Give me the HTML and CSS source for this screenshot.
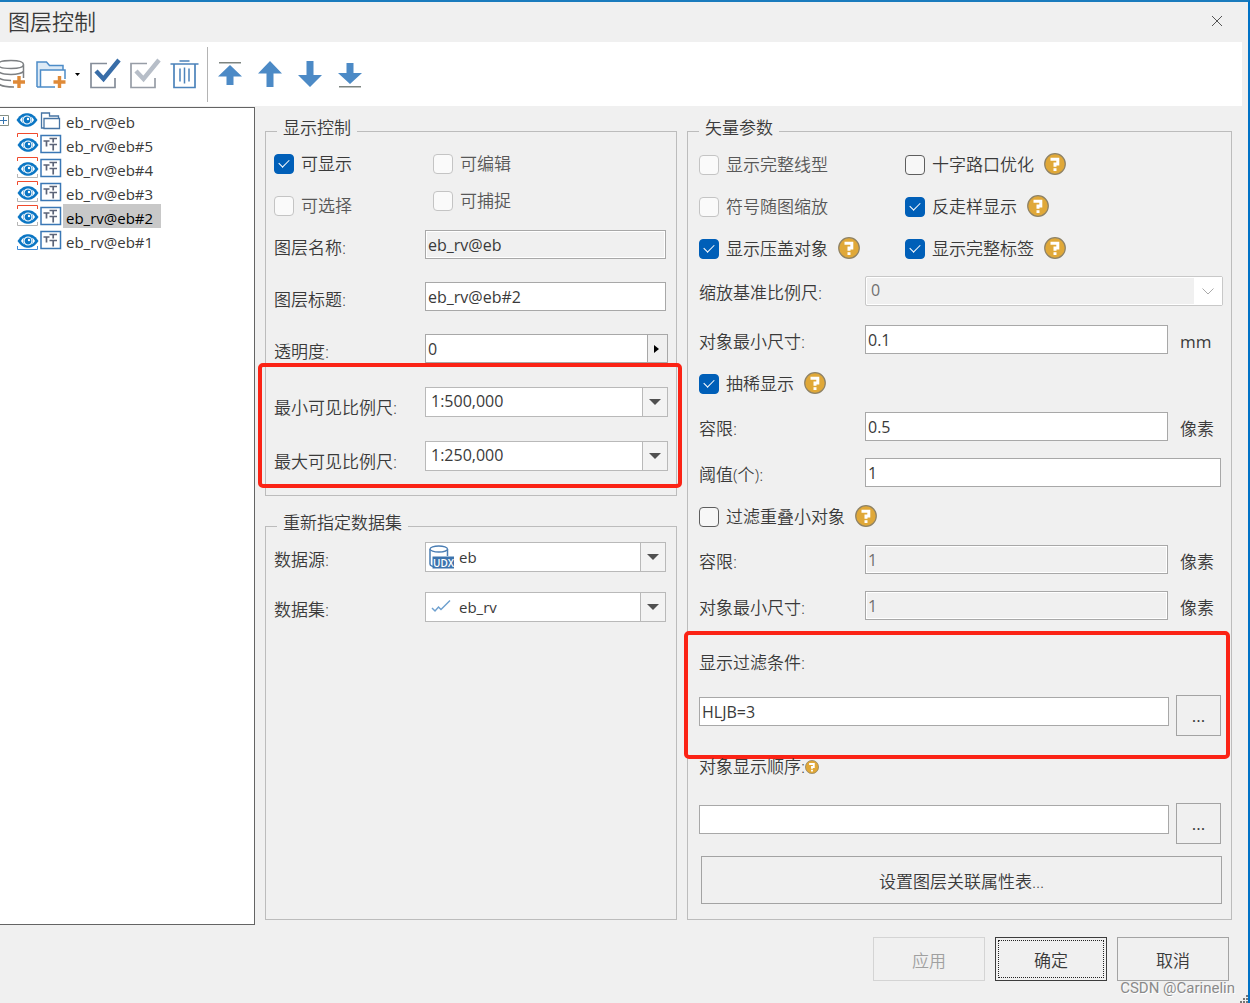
FILE: index.html
```html
<!DOCTYPE html>
<html lang="zh-CN">

<head>
    <meta charset="utf-8">
    <title>图层控制</title>
    <link rel="stylesheet" href="styles.css">
</head>

<body>

    <!-- Shared icons -->
    <svg class="icon-defs" aria-hidden="true">
        <symbol id="help" viewBox="0 0 22 22">
            <circle cx="11" cy="11" r="10.3" fill="#e0a838" stroke="#8f8264" stroke-width="1.2" />
            <path d="M6.5 6.3h7.300v4.700H11v2.800" fill="none" stroke="#fff" stroke-width="3" />
            <path d="M9.5 15.2h3v2.8h-3z" fill="#fff" />
        </symbol>
        <symbol id="eye" viewBox="0 0 22 14">
            <path d="M.5 7C4.500 1 8 .3 11 .3S17.500 1 21.500 7C17.500 13 14 13.700 11 13.700S4.500 13 .5 7z" fill="#0b76c4" />
            <path d="M4 7C5.200 5 6.300 4 7.300 3.600 5.700 5.500 5.700 8.500 7.300 10.400 6.300 10 5.200 9 4 7zM18 7C16.800 5 15.700 4 14.700 3.600c1.600 1.900 1.600 4.900 0 6.800C15.700 10 16.800 9 18 7z" fill="#fff" />
            <circle cx="11" cy="7" r="4" fill="#0b76c4" stroke="#fff" stroke-width="1.200" />
            <circle cx="12" cy="6" r="1.200" fill="#fff" />
        </symbol>
        <symbol id="text-layer" viewBox="0 0 22 24">
            <path d="M1 3.500h19.500v17H1z" fill="#fff" stroke="#3a77b5" stroke-width="1.500" />
            <path d="M3.500 9h6M6.500 9v5.500M9.500 6.500h7.500M13.200 6.500v4M9.500 12.500h7.500M13.200 12.500v6" fill="none" stroke="#5c6478" stroke-width="1.700" />
        </symbol>
        <symbol id="arrow-down" viewBox="0 0 12 6">
            <path d="M0 0h12L6 6z" fill="#505050" />
        </symbol>
    </svg>

    <div class="titlebar">
        <h1>图层控制</h1>
        <button type="button" class="close" aria-label="关闭">
            <svg width="12" height="12" viewBox="0 0 12 12"><path d="M1 1l10 10M11 1L1 11" stroke="#555" /></svg>
        </button>
    </div>

    <div class="toolbar">
        <button type="button" class="tool tool-first" aria-label="添加数据源">
            <svg width="26" height="32" viewBox="0 0 26 32" fill="none">
                <path d="M-2 6.500C-2 4 3 2.500 11 2.500S23.500 4 23.500 6.500 19 10.500 11 10.500-2 9 -2 6.500zM23.500 6.500V20M-1 14c2 2 6 2.500 12 2.500s12-1.500 12.500-3.500M-1 20c2 2 6 2.500 12 2.500M-1 26c2 2 6 3 15 3" stroke="#7d8083" stroke-width="1.500" />
                <path d="M19 18v12M13 24h12" stroke="#df8a38" stroke-width="3.400" />
            </svg>
        </button>
        <button type="button" class="tool" aria-label="添加图层组">
            <svg width="32" height="32" viewBox="0 0 32 32" fill="none">
                <path d="M3 29V4h9l3 3.500h14V12H7v17z" fill="#dceaf6" />
                <path d="M3 29V4h9.500l3 3.500H29V12M3 29h18M6.500 29V12H31v9" stroke="#4c8cc8" stroke-width="1.500" />
                <path d="M25.500 18v12M19.500 24h12" stroke="#df8a38" stroke-width="3.400" />
            </svg>
        </button>
        <button type="button" class="tool tool-caret" aria-label="更多">
            <svg width="5" height="3" viewBox="0 0 5 3"><path d="M0 0h5L2.500 3z" /></svg>
        </button>
        <button type="button" class="tool" aria-label="全选">
            <svg width="32" height="32" viewBox="0 0 32 32" fill="none">
                <path d="M18 5.500H2v24h24V20" stroke="#858d99" stroke-width="1.700" />
                <path d="M7 13l7.500 8L30 2" stroke="#386da8" stroke-width="4.400" />
            </svg>
        </button>
        <button type="button" class="tool" aria-label="反选">
            <svg width="32" height="32" viewBox="0 0 32 32" fill="none">
                <path d="M18 5.500H2v24h24V20" stroke="#979da6" stroke-width="1.700" />
                <path d="M7 13l7.500 8L30 2" stroke="#b7bec8" stroke-width="4.400" />
            </svg>
        </button>
        <button type="button" class="tool" aria-label="删除">
            <svg width="32" height="32" viewBox="0 0 32 32" fill="none" stroke="#4c83bb">
                <path d="M1.500 6h28M10.500 3h10M5 6.500v23h21v-23" stroke-width="1.700" />
                <path d="M11 10.500v13M15.500 9.500v16M20 10.500v13" stroke-width="1.500" />
            </svg>
        </button>
        <span class="separator"></span>
        <button type="button" class="tool" aria-label="置顶">
            <svg width="32" height="32" viewBox="0 0 32 32">
                <path d="M5 4h22v1.500H5z" fill="#7d8480" />
                <path d="M16 7L28 18.500h-8.500V27h-7v-8.500H4z" fill="#4c8ac6" />
            </svg>
        </button>
        <button type="button" class="tool" aria-label="上移">
            <svg width="32" height="32" viewBox="0 0 32 32"><path d="M16 3l12 12.500h-8.500V29h-7V15.500H4z" fill="#4c8ac6" /></svg>
        </button>
        <button type="button" class="tool" aria-label="下移">
            <svg width="32" height="32" viewBox="0 0 32 32"><path d="M16 29L28 17h-8.500V3h-7v14H4z" fill="#4c8ac6" /></svg>
        </button>
        <button type="button" class="tool" aria-label="置底">
            <svg width="32" height="32" viewBox="0 0 32 32">
                <path d="M16 26L28 15h-8.500V5h-7v10H4z" fill="#4c8ac6" />
                <path d="M5 28h22v1.500H5z" fill="#7d8480" />
            </svg>
        </button>
    </div>

    <main class="content">

        <ul class="tree">
            <li>
                <svg width="16" height="24" viewBox="0 0 16 24" fill="none"><path d="M-2 7.500H8.500v10H-2z" stroke="#858f85" /><path d="M0 12.500h7M3.500 9v7" stroke="#3374b0" /></svg>
                <svg width="24" height="24"><use href="#eye" y="5" width="22" height="14" /></svg>
                <svg width="22" height="24" viewBox="0 0 22 24" fill="#fff" stroke="#4674a4" stroke-width="1.300"><path d="M1.500 20V5h8v3h9v12z" /><path d="M4 20.500V10.500h15.500v10z" /></svg>
                <span class="name">eb_rv@eb</span>
            </li>
            <li>
                <svg width="16" height="24"></svg>
                <svg width="24" height="24" fill="none"><path d="M1.500 5V1.500h20V5" stroke="#f04a2c" /><use href="#eye" x="1" y="6" width="22" height="14" /></svg>
                <svg width="22" height="24"><use href="#text-layer" /></svg>
                <span class="name">eb_rv@eb#5</span>
            </li>
            <li>
                <svg width="16" height="24"></svg>
                <svg width="24" height="24" fill="none"><path d="M1.500 5V1.500h20V5" stroke="#f04a2c" /><path d="M1.500 18v3.500h20V18" stroke="#b5b5b5" /><use href="#eye" x="1" y="6" width="22" height="14" /></svg>
                <svg width="22" height="24"><use href="#text-layer" /></svg>
                <span class="name">eb_rv@eb#4</span>
            </li>
            <li>
                <svg width="16" height="24"></svg>
                <svg width="24" height="24" fill="none"><path d="M1.500 5V1.500h20V5" stroke="#f04a2c" /><path d="M1.500 18v3.500h20V18" stroke="#b5b5b5" /><use href="#eye" x="1" y="6" width="22" height="14" /></svg>
                <svg width="22" height="24"><use href="#text-layer" /></svg>
                <span class="name">eb_rv@eb#3</span>
            </li>
            <li class="selected">
                <svg width="16" height="24"></svg>
                <svg width="24" height="24" fill="none"><path d="M1.500 5V1.500h20V5" stroke="#f04a2c" /><path d="M1.500 18v3.500h20V18" stroke="#b5b5b5" /><use href="#eye" x="1" y="6" width="22" height="14" /></svg>
                <svg width="22" height="24"><use href="#text-layer" /></svg>
                <span class="name">eb_rv@eb#2</span>
            </li>
            <li>
                <svg width="16" height="24"></svg>
                <svg width="24" height="24" fill="none"><path d="M1.500 18v3.500h20V18" stroke="#3d8ad8" /><use href="#eye" x="1" y="6" width="22" height="14" /></svg>
                <svg width="22" height="24"><use href="#text-layer" /></svg>
                <span class="name">eb_rv@eb#1</span>
            </li>
        </ul>

        <div class="column">
            <fieldset class="group display-group">
                <legend>显示控制</legend>
                <div class="display-checks">
                    <div class="check-list">
                        <label class="check"><input type="checkbox" checked>可显示</label>
                        <label class="check disabled"><input type="checkbox" disabled>可选择</label>
                    </div>
                    <div class="check-list tight">
                        <label class="check disabled"><input type="checkbox" disabled>可编辑</label>
                        <label class="check disabled"><input type="checkbox" disabled>可捕捉</label>
                    </div>
                </div>
                <div class="row">
                    <label for="layer-name">图层名称:</label>
                    <input type="text" class="inset" id="layer-name" value="eb_rv@eb" readonly>
                </div>
                <div class="row">
                    <label for="layer-title">图层标题:</label>
                    <input type="text" class="inset" id="layer-title" value="eb_rv@eb#2">
                </div>
                <div class="row">
                    <label for="opacity">透明度:</label>
                    <div class="spin">
                        <input type="text" id="opacity" value="0">
                        <button type="button" aria-label="调整透明度"><svg width="5" height="8" viewBox="0 0 5 8"><path d="M0 0l5 4-5 4z" /></svg></button>
                    </div>
                </div>
                <div class="scales">
                    <div class="row">
                        <label for="min-scale">最小可见比例尺:</label>
                        <div class="combo">
                            <select id="min-scale"><option>1:500,000</option></select>
                            <span class="drop"><svg width="12" height="6"><use href="#arrow-down" /></svg></span>
                        </div>
                    </div>
                    <div class="row">
                        <label for="max-scale">最大可见比例尺:</label>
                        <div class="combo">
                            <select id="max-scale"><option>1:250,000</option></select>
                            <span class="drop"><svg width="12" height="6"><use href="#arrow-down" /></svg></span>
                        </div>
                    </div>
                    <span class="marker"></span>
                </div>
            </fieldset>

            <fieldset class="group dataset-group">
                <legend>重新指定数据集</legend>
                <div class="row">
                    <label for="datasource">数据源:</label>
                    <div class="combo with-icon inset">
                        <select id="datasource"><option>eb</option></select>
                        <svg class="combo-icon" width="26" height="24" viewBox="0 0 26 24">
                            <path d="M1 4v15c0 2 3 3 9 3M18.500 4v7" fill="none" stroke="#4a7db3" stroke-width="1.500" />
                            <ellipse cx="9.750" cy="4" rx="8.750" ry="3" fill="#fff" stroke="#4a7db3" stroke-width="1.300" />
                            <path d="M3.500 11.500h21.500V23.500H3.500z" fill="#3c73ad" />
                            <text x="4" y="21.500" fill="#fff" font-size="10" font-weight="600">UDX</text>
                        </svg>
                        <span class="drop"><svg width="12" height="6"><use href="#arrow-down" /></svg></span>
                    </div>
                </div>
                <div class="row">
                    <label for="dataset">数据集:</label>
                    <div class="combo with-icon inset">
                        <select id="dataset"><option>eb_rv</option></select>
                        <svg class="combo-icon" width="26" height="24" viewBox="0 0 26 24"><path d="M3 13l3 3 3.500-4L12 14.500l9-9" fill="none" stroke="#6ea0cf" stroke-width="1.500" /></svg>
                        <span class="drop"><svg width="12" height="6"><use href="#arrow-down" /></svg></span>
                    </div>
                </div>
            </fieldset>
        </div>

        <fieldset class="group vector-group">
            <legend>矢量参数</legend>
            <div class="vector-checks">
                <div class="check-row"><label class="check disabled"><input type="checkbox" disabled>显示完整线型</label></div>
                <div class="check-row"><label class="check"><input type="checkbox">十字路口优化</label><svg class="help"><use href="#help" /></svg></div>
                <div class="check-row"><label class="check disabled"><input type="checkbox" disabled>符号随图缩放</label></div>
                <div class="check-row"><label class="check"><input type="checkbox" checked>反走样显示</label><svg class="help"><use href="#help" /></svg></div>
                <div class="check-row"><label class="check"><input type="checkbox" checked>显示压盖对象</label><svg class="help"><use href="#help" /></svg></div>
                <div class="check-row"><label class="check"><input type="checkbox" checked>显示完整标签</label><svg class="help"><use href="#help" /></svg></div>
            </div>
            <div class="row">
                <label for="base-scale">缩放基准比例尺:</label>
                <div class="combo off">
                    <select id="base-scale" disabled><option>0</option></select>
                    <span class="drop"><svg width="12" height="7" viewBox="0 0 12 7"><path d="M.5.5L6 6 11.500.5" fill="none" stroke="#aaa" /></svg></span>
                </div>
            </div>
            <div class="row base-size">
                <label for="min-size">对象最小尺寸:</label>
                <input type="text" id="min-size" value="0.1">
                <span class="unit latin">mm</span>
            </div>
            <div class="check-row"><label class="check"><input type="checkbox" checked>抽稀显示</label><svg class="help"><use href="#help" /></svg></div>
            <div class="row">
                <label for="tolerance">容限:</label>
                <input type="text" id="tolerance" value="0.5">
                <span class="unit">像素</span>
            </div>
            <div class="row">
                <label for="threshold">阈值(个):</label>
                <input type="text" class="inset" id="threshold" value="1">
            </div>
            <div class="check-row"><label class="check"><input type="checkbox">过滤重叠小对象</label><svg class="help"><use href="#help" /></svg></div>
            <div class="row">
                <label for="overlap-tolerance">容限:</label>
                <input type="text" id="overlap-tolerance" value="1" disabled>
                <span class="unit">像素</span>
            </div>
            <div class="row">
                <label for="overlap-size">对象最小尺寸:</label>
                <input type="text" id="overlap-size" value="1" disabled>
                <span class="unit">像素</span>
            </div>
            <div class="expression filter">
                <label for="filter">显示过滤条件:</label>
                <div class="browse">
                    <input type="text" id="filter" value="HLJB=3">
                    <button type="button">...</button>
                </div>
                <span class="marker"></span>
            </div>
            <div class="expression order">
                <label for="order">对象显示顺序:<svg class="help-small"><use href="#help" /></svg></label>
                <div class="browse">
                    <input type="text" id="order">
                    <button type="button">...</button>
                </div>
            </div>
            <button type="button" class="link-table">设置图层关联属性表...</button>
        </fieldset>

    </main>

    <footer class="actions">
        <button type="button" disabled>应用</button>
        <button type="submit" class="default">确定</button>
        <button type="button">取消</button>
    </footer>

    <span class="watermark">CSDN @Carinelin</span>
    <svg class="grip" width="8" height="8" viewBox="0 0 8 8" fill="#777"><path d="M6 0h2v2H6zM3 3h2v2H3zM6 3h2v2H6zM0 6h2v2H0zM3 6h2v2H3zM6 6h2v2H6z" /></svg>

</body>

</html>
```

FILE: styles.css
```css
* {
    box-sizing: border-box;
}

body {
    position: relative;
    display: flex;
    flex-direction: column;
    min-height: 100vh;
    margin: 0;
    border-top: 2px solid #1a7bbd;
    border-right: 2px solid #0072c6;
    overflow-x: hidden;
    color: #3a3a3a;
    background-color: #f0f0f0;
    font-family: "Open Sans", "Noto Sans CJK SC", sans-serif;
    font-size: 17px;
    font-weight: 350;
    line-height: 20px;
}

svg {
    display: block;
    flex: none;
}

button,
input,
select {
    margin: 0;
    color: inherit;
    font-family: inherit;
    font-weight: inherit;
}

.icon-defs {
    position: absolute;
    width: 0;
    height: 0;
}

/* Title bar */
.titlebar {
    display: flex;
    align-items: center;
    justify-content: space-between;
    height: 40px;
    padding: 0 25px 2px 8px;
}

.titlebar h1 {
    margin: 0;
    font-size: 22px;
    font-weight: 350;
    line-height: 32px;
}

.close {
    padding: 0;
    border: none;
    background: none;
}

/* Toolbar */
.toolbar {
    display: flex;
    align-items: center;
    gap: 8px;
    height: 64px;
    margin-right: 6px;
    background-color: #fff;
}

.tool {
    display: flex;
    align-items: center;
    justify-content: center;
    width: 32px;
    height: 32px;
    padding: 0;
    border: none;
    background: none;
}

.tool-first {
    width: 26px;
}

.tool-caret {
    width: 23px;
    margin: 0 0 0 -8px;
}

.tool-caret + .tool {
    margin-left: -8px;
}

.separator {
    width: 1px;
    height: 55px;
    margin: 0 -2px;
    background-color: #b4b4b4;
}

/* Main area */
.content {
    display: grid;
    grid-template-columns: 255px 412px 1fr;
    column-gap: 10px;
    flex: 1;
    margin-top: 1px;
    padding-right: 16px;
}

.column {
    display: flex;
    flex-direction: column;
    gap: 17px;
    padding: 11px 0 5px;
}

/* Layer tree */
.tree {
    margin: 0;
    padding: 0;
    border: 1px solid #646464;
    border-left: none;
    background-color: #fff;
    list-style: none;
    font-size: 15px;
    font-weight: 400;
}

.tree li {
    display: flex;
    height: 24px;
}

.tree .name {
    margin-left: 1px;
    padding: 4px 8px 0 3px;
}

.tree .selected .name {
    color: #000;
    background-color: #c8c8c8;
}

/* Group boxes */
.group {
    min-width: 0;
    margin: 0;
    padding: 7px 8px 24px;
    border: 1px solid #bcbcbc;
}

.group legend {
    margin-left: 3px;
    padding: 0 6px 6px;
}

.dataset-group {
    flex: 1;
    padding-top: 3px;
}

.vector-group {
    margin: 11px 0 5px;
    padding: 8px 8px 15px 11px;
}

.vector-group legend {
    margin-left: 0;
}

/* Check boxes */
.check {
    display: flex;
    align-items: center;
    gap: 7px;
    height: 25px;
}

.check.disabled {
    color: #585858;
}

.check input {
    display: grid;
    place-items: center;
    width: 20px;
    height: 20px;
    border: 1px solid #5e5e5e;
    border-radius: 4px;
    background-color: #f7f7f7;
    appearance: none;
}

.check input:disabled {
    border-color: #c4c4c4;
    background-color: #fafafa;
}

.check input:checked {
    border-color: #005fb8;
    background-color: #005fb8;
}

.check input:checked:before {
    content: '';
    width: 9px;
    height: 5px;
    margin-top: -3px;
    border: solid #fff;
    border-width: 0 0 1px 1px;
    transform: rotate(-45deg);
}

.check-row {
    display: flex;
    align-items: center;
    gap: 10px;
}

.help {
    width: 22px;
    height: 22px;
    margin-bottom: 2px;
}

.display-checks {
    display: grid;
    grid-template-columns: 159px 1fr;
    margin-bottom: 12px;
}

.check-list {
    display: grid;
    align-content: start;
    gap: 17px;
}

.check-list.tight {
    gap: 12px;
}

.vector-checks {
    display: grid;
    grid-template-columns: 206px 1fr;
    row-gap: 17px;
    margin-bottom: 15px;
}

/* Form rows */
.row {
    display: grid;
    grid-template-columns: 151px 1fr;
    grid-template-rows: 30px;
}

.row label {
    padding-top: 8px;
}

.display-group .row {
    margin-bottom: 22px;
}

.dataset-group .row {
    margin-bottom: 20px;
}

.vector-group .row,
.vector-group > .check-row {
    margin-bottom: 16px;
}

.vector-group .row {
    grid-template-columns: 166px 1fr 55px;
}

.vector-group .row .combo,
.vector-group .row .inset {
    grid-column: 2 / 4;
}

.vector-group .row label {
    padding-top: 7px;
}

.vector-group .row .unit {
    padding: 7px 0 0 12px;
}

.unit.latin {
    font-weight: 400;
}

.vector-group .base-size {
    margin-top: 19px;
}

.inset {
    margin-right: 2px;
}

input[type="text"] {
    width: 100%;
    min-width: 0;
    height: 29px;
    padding: 0 2px;
    border: 1px solid #a8a8a8;
    background-color: #fff;
    font-size: 16px;
    font-weight: 400;
}

.row input.inset {
    width: auto;
}

input[type="text"]:read-only,
input[type="text"]:disabled {
    background-color: #f0f0f0;
    box-shadow: inset 0 0 0 1px #fff;
}

input[type="text"]:disabled {
    color: #707070;
}

.spin {
    display: flex;
    height: 29px;
}

.spin button {
    display: grid;
    place-items: center;
    flex: none;
    width: 21px;
    padding: 0 3px 0 0;
    border: 1px solid #a8a8a8;
    background-color: #f0f0f0;
}

.spin input[type="text"] {
    border-right: none;
}

/* Drop downs */
.combo {
    position: relative;
}

.combo select {
    width: 100%;
    height: 30px;
    padding: 0 26px 2px 5px;
    border: 1px solid #b9b9b9;
    border-radius: 0;
    background-color: #fff;
    font-size: 16px;
    font-weight: 400;
    appearance: none;
}

.combo .drop {
    position: absolute;
    top: 1px;
    right: 1px;
    bottom: 1px;
    display: grid;
    place-items: center;
    width: 25px;
    border-left: 1px solid #b9b9b9;
    background-color: #f3f3f3;
    pointer-events: none;
}

.combo.with-icon select {
    padding: 0 26px 0 33px;
    font-size: 15px;
}

.combo-icon {
    position: absolute;
    top: 3px;
    left: 4px;
    pointer-events: none;
}

.combo.off select {
    border-color: #c8c8c8;
    border-radius: 2px;
    color: #707070;
    background-color: #f0f0f0;
    box-shadow: inset 0 0 0 1px #fff;
    opacity: 1;
}

.combo.off .drop {
    width: 28px;
    border: none;
    background-color: #fff;
}

/* Visible scale range */
.scales {
    position: relative;
    margin-top: 23px;
}

.display-group .scales .row {
    margin-bottom: 24px;
}

.display-group .scales .row:nth-child(2) {
    margin-bottom: 0;
}

.scales .row label {
    padding-top: 11px;
}

.marker {
    position: absolute;
    border: 4px solid #fb2315;
    border-radius: 5px;
    pointer-events: none;
}

.scales .marker {
    top: -24px;
    right: -14px;
    bottom: -17px;
    left: -16px;
}

/* Filter and order expressions */
.expression {
    position: relative;
}

.expression label {
    display: flex;
    align-items: center;
}

.filter {
    margin: 32px 0 21px;
}

.filter .marker {
    top: -22px;
    right: -7px;
    bottom: -23px;
    left: -15px;
}

.browse {
    display: flex;
    gap: 7px;
    margin-top: 22px;
    padding-right: 2px;
}

.order .browse {
    margin-top: 26px;
}

.browse input[type="text"] {
    margin-top: 2px;
}

.help-small {
    width: 14px;
    height: 14px;
}

.browse button,
.link-table,
.actions button {
    border: 1px solid #a3a3a3;
    background-color: #f0f0f0;
    font-size: 17px;
}

.browse button {
    flex: none;
    width: 45px;
    height: 41px;
    padding: 0;
    font-weight: 400;
}

.link-table {
    display: block;
    width: calc(100% - 3px);
    height: 48px;
    margin: 12px 0 0 2px;
}

/* Bottom buttons */
.actions {
    display: flex;
    justify-content: flex-end;
    gap: 10px;
    padding: 12px 19px 22px;
}

.actions button {
    width: 112px;
    height: 44px;
}

.actions button:disabled {
    border-color: #d4d4d4;
    color: #a0a0a0;
}

.actions .default {
    border-color: #3c3c3c;
    outline: 1px dotted #222;
    outline-offset: -4px;
}

.watermark {
    position: absolute;
    right: 13px;
    bottom: 5px;
    color: #8a8a8a;
    font-family: Roboto, sans-serif;
    font-size: 15px;
    font-weight: 400;
    text-shadow: 1px 1px 0 #fff;
}

.grip {
    position: absolute;
    right: 0;
    bottom: 0;
}
```
